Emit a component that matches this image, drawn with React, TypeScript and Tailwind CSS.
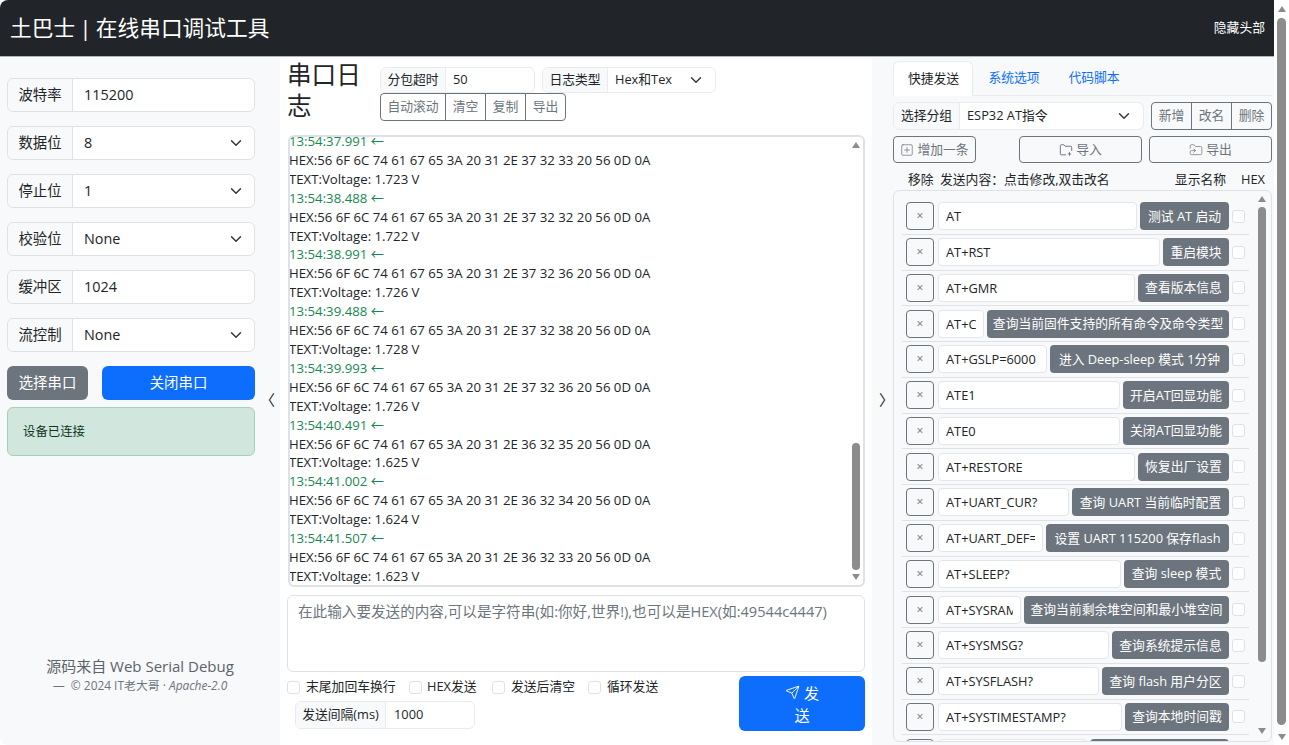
import React from "react";
import { Send, SquarePlus, FolderSymlink } from "lucide-react";

const Chevron = () => (
  <svg width="12" height="12" viewBox="0 0 16 16" fill="none" stroke="#343a40" strokeWidth="2" strokeLinecap="round" strokeLinejoin="round" className="shrink-0">
    <path d="M2 5l6 6 6-6" />
  </svg>
);

const Up = () => <div className="w-0 h-0 border-l-[4.5px] border-r-[4.5px] border-b-[6px] border-l-transparent border-r-transparent border-b-[#8c8c8c]" />;
const Down = () => <div className="w-0 h-0 border-l-[4.5px] border-r-[4.5px] border-t-[6px] border-l-transparent border-r-transparent border-t-[#8c8c8c]" />;

const Field = ({ label, value, select }: { label: string; value: string; select?: boolean }) => (
  <div className="flex h-[34px] rounded-[6px] border border-[#dee2e6] text-[14.4px] text-[#212529]">
    <div className="w-[65px] shrink-0 flex items-center justify-center border-r border-[#dee2e6] bg-[#f8f9fa] rounded-l-[6px]">{label}</div>
    <div className="flex-1 flex items-center justify-between pl-[11px] pr-[12px] bg-white rounded-r-[6px]">
      <span>{value}</span>
      {select && <Chevron />}
    </div>
  </div>
);

const logs = [
  ["13:54:37.991", "1.723"],
  ["13:54:38.488", "1.722"],
  ["13:54:38.991", "1.726"],
  ["13:54:39.488", "1.728"],
  ["13:54:39.993", "1.726"],
  ["13:54:40.491", "1.625"],
  ["13:54:41.002", "1.624"],
  ["13:54:41.507", "1.623"],
];

const hexFor = (v: string) => `HEX:56 6F 6C 74 61 67 65 3A 20 31 2E 3${v[2]} 3${v[3]} 3${v[4]} 20 56 0D 0A`;

const rows: [string, string, number][] = [
  ["AT", "测试 AT 启动", 89],
  ["AT+RST", "重启模块", 66],
  ["AT+GMR", "查看版本信息", 91],
  ["AT+CMD?", "查询当前固件支持的所有命令及命令类型", 242],
  ["AT+GSLP=6000", "进入 Deep-sleep 模式 1分钟", 179],
  ["ATE1", "开启AT回显功能", 106],
  ["ATE0", "关闭AT回显功能", 106],
  ["AT+RESTORE", "恢复出厂设置", 91],
  ["AT+UART_CUR?", "查询 UART 当前临时配置", 157],
  ["AT+UART_DEF=115200,8,1,0,3", "设置 UART 115200 保存flash", 183],
  ["AT+SLEEP?", "查询 sleep 模式", 105],
  ["AT+SYSRAM?", "查询当前剩余堆空间和最小堆空间", 205],
  ["AT+SYSMSG?", "查询系统提示信息", 117],
  ["AT+SYSFLASH?", "查询 flash 用户分区", 127],
  ["AT+SYSTIMESTAMP?", "查询本地时间戳", 104],
  ["AT+SYSLOG=1", "启用或禁用 AT 错误代码提示", 139],
];

const Check = ({ label, cls }: { label: string; cls: string }) => (
  <div className={`flex items-center ${cls}`}>
    <span className="w-[13px] h-[13px] rounded-[3px] border border-[#dee2e6] bg-white shrink-0" />
    <span>{label}</span>
  </div>
);

export default function App() {
  return (
    <div className="w-[1289px] h-[745px] flex overflow-hidden rounded-[8px] bg-white relative font-['Open_Sans','Noto_Sans_CJK_SC',sans-serif] text-[#212529]">
      <div className="flex-1 min-w-0 flex flex-col">
        <header className="h-[57px] shrink-0 bg-[#212529] border-b border-[#adb5bd] flex items-center justify-between pl-[10px] pr-[9px] text-white">
          <div className="text-[21.7px] [word-spacing:-1.2px]">土巴士 | 在线串口调试工具</div>
          <div className="text-[12.8px]">隐藏头部</div>
        </header>
        <div className="flex-1 min-h-0 flex">
          {/* left */}
          <aside className="w-[280px] shrink-0 bg-[#f8f9fa] pl-[7px] pr-[25px] pt-[21px] flex flex-col relative">
            <div className="flex flex-col gap-[14px]">
              <Field label="波特率" value="115200" />
              <Field label="数据位" value="8" select />
              <Field label="停止位" value="1" select />
              <Field label="校验位" value="None" select />
              <Field label="缓冲区" value="1024" />
              <Field label="流控制" value="None" select />
            </div>
            <div className="flex justify-between mt-[14px]">
              <button className="w-[81px] h-[34px] rounded-[6px] bg-[#6c757d] text-white text-[14.4px]">选择串口</button>
              <button className="w-[153px] h-[34px] rounded-[6px] bg-[#0d6efd] text-white text-[14.4px]">关闭串口</button>
            </div>
            <div className="mt-[7px] h-[49px] rounded-[6px] border border-[#a3cfbb] bg-[#d1e7dd] text-[#0a3622] text-[12.4px] flex items-center pl-[15px] pt-[1px]">设备已连接</div>
            <div className="mt-auto mb-[51px] -ml-[7px] -mr-[25px] text-center text-[#5c636a]">
              <div className="text-[15px] leading-[20px]">源码来自 Web Serial Debug</div>
              <div className="text-[11.9px] leading-[18px] text-[#6c757d]">—&nbsp; © 2024 IT老大哥 · <i>Apache-2.0</i></div>
            </div>
            <span className="absolute left-[260px] top-[333px] text-[15px] leading-[20px] text-[#212529]">〈</span>
          </aside>

          {/* center */}
          <main className="w-[592px] shrink-0 px-[7px] bg-white flex flex-col">
            <div className="flex h-[77px] pt-[2px]">
              <h1 className="w-[93px] shrink-0 text-[24.6px] leading-[31px] font-normal">串口日志</h1>
              <div className="flex flex-col pt-[8px]">
                <div className="flex gap-[7px] h-[26px] text-[12.8px]">
                  <div className="flex w-[155px] rounded-[6px] border border-[#e9ecef]">
                    <div className="w-[65px] flex items-center justify-center bg-[#f8f9fa] border-r border-[#e9ecef] rounded-l-[6px]">分包超时</div>
                    <div className="flex-1 flex items-center pl-[7px]">50</div>
                  </div>
                  <div className="flex w-[174px] rounded-[6px] border border-[#e9ecef]">
                    <div className="w-[65px] flex items-center justify-center bg-[#f8f9fa] border-r border-[#e9ecef] rounded-l-[6px]">日志类型</div>
                    <div className="flex-1 flex items-center justify-between pl-[7px] pr-[13px]">
                      <span className="w-[57px] overflow-hidden whitespace-nowrap">Hex和Text</span>
                      <Chevron />
                    </div>
                  </div>
                </div>
                <div className="flex h-[28px] w-[186px] text-[12.8px] text-[#6c757d] rounded-[4px] border border-[#6c757d]">
                  <div className="w-[65px] flex items-center justify-center border-r border-[#6c757d]">自动滚动</div>
                  <div className="w-[40px] flex items-center justify-center border-r border-[#6c757d]">清空</div>
                  <div className="w-[40px] flex items-center justify-center border-r border-[#6c757d]">复制</div>
                  <div className="flex-1 flex items-center justify-center">导出</div>
                </div>
              </div>
            </div>
            <div className="ml-[1px] mt-[1px] h-[452px] flex rounded-[6px] border-2 border-[#dee2e6] overflow-hidden">
              <div className="flex-1 min-w-0 overflow-hidden text-[13.2px] leading-[18.9px] whitespace-nowrap">
                <div className="-mt-[5px] -ml-[1px]">
                  {logs.map(([t, v]) => (
                    <div key={t}>
                      <div className="text-[#198754]">{t} ←</div>
                      <div>{hexFor(v)}</div>
                      <div>TEXT:Voltage: {v} V</div>
                    </div>
                  ))}
                </div>
              </div>
              <div className="w-[14px] shrink-0 flex flex-col items-center pt-[5px] pb-[5px]">
                <Up />
                <div className="w-[8px] h-[127px] rounded-full bg-[#8c8c8c] mt-[295px]" />
                <div className="mt-auto"><Down /></div>
              </div>
            </div>
            <textarea
              readOnly
              placeholder="在此输入要发送的内容,可以是字符串(如:你好,世界!),也可以是HEX(如:49544c4447)"
              className="mt-[8px] h-[77px] w-full resize-none rounded-[6px] border border-[#dee2e6] px-[10px] py-[5px] text-[14.6px] leading-[21px] placeholder:text-[#6c757d] outline-none"
            />
            <div className="flex mt-[4px]">
              <div className="flex-1 min-w-0 text-[12.8px]">
                <div className="flex h-[22px] items-center">
                  <Check label="末尾加回车换行" cls="gap-[6px] w-[122px]" />
                  <Check label="HEX发送" cls="gap-[5px] w-[83px]" />
                  <Check label="发送后清空" cls="gap-[6px] w-[96px]" />
                  <Check label="循环发送" cls="gap-[6px]" />
                </div>
                <div className="ml-[8px] mt-[3px] flex w-[180px] h-[28px] rounded-[6px] border border-[#e9ecef]">
                  <div className="w-[90px] flex items-center justify-center bg-[#f8f9fa] border-r border-[#e9ecef] rounded-l-[6px]">发送间隔(ms)</div>
                  <div className="flex-1 flex items-center pl-[8px]">1000</div>
                </div>
              </div>
              <button className="w-[126px] h-[55px] rounded-[6px] bg-[#0d6efd] text-white text-[15.2px] leading-[22px] flex flex-col items-center justify-center">
                <span className="flex items-center gap-[4px]"><Send size={15} strokeWidth={1.5} />发</span>
                <span>送</span>
              </button>
            </div>
          </main>

          {/* right */}
          <section className="w-[402px] shrink-0 bg-[#f8f9fa] pl-[21px] pr-[2px] relative min-h-0 flex flex-col">
            <span className="absolute left-[7px] top-[333px] text-[15px] leading-[20px] text-[#212529]">〉</span>
            <div className="flex h-[39px] pt-[4px] border-b border-[#e9ecef] text-[12.8px] text-[#0d6efd]">
              <div className="w-[80px] h-[35px] pl-[1px] bg-white border border-b-0 border-[#e9ecef] rounded-t-[6px] flex items-center justify-center text-[#212529]">快捷发送</div>
              <div className="w-[80px] pl-[2px] flex items-center justify-center">系统选项</div>
              <div className="w-[80px] pl-[2px] flex items-center justify-center">代码脚本</div>
            </div>
            <div className="flex justify-between mt-[6px] h-[28px] text-[12.8px]">
              <div className="flex w-[251px] rounded-[6px] border border-[#e9ecef]">
                <div className="w-[66px] flex items-center justify-center bg-[#f8f9fa] border-r border-[#e9ecef] rounded-l-[6px]">选择分组</div>
                <div className="flex-1 flex items-center justify-between pl-[7px] pr-[13px] bg-white rounded-r-[6px]">
                  <span>ESP32 AT指令</span>
                  <Chevron />
                </div>
              </div>
              <div className="flex w-[121px] rounded-[4px] border border-[#6c757d] text-[#6c757d]">
                <div className="flex-1 flex items-center justify-center border-r border-[#6c757d]">新增</div>
                <div className="flex-1 flex items-center justify-center border-r border-[#6c757d]">改名</div>
                <div className="flex-1 flex items-center justify-center">删除</div>
              </div>
            </div>
            <div className="flex mt-[6px] h-[27px] text-[12.8px] text-[#6c757d]">
              <div className="w-[83px] rounded-[4px] border border-[#6c757d] flex items-center justify-center gap-[3px]">
                <SquarePlus size={14} strokeWidth={1.25} />增加一条
              </div>
              <div className="ml-[43px] w-[123px] rounded-[4px] border border-[#6c757d] flex items-center justify-center gap-[3px]">
                <svg width="14" height="14" viewBox="0 0 16 16" fill="none" stroke="currentColor" strokeWidth="1.1">
                  <path d="M8 13.5H2.5a1 1 0 0 1-1-1V3a1 1 0 0 1 1-1h3l1.5 1.7h6.5a1 1 0 0 1 1 1V9" />
                  <path d="M12 10.5v4M10 12.5h4" />
                </svg>
                导入
              </div>
              <div className="ml-[7px] w-[123px] rounded-[4px] border border-[#6c757d] flex items-center justify-center gap-[3px]">
                <FolderSymlink size={14} strokeWidth={1.25} />导出
              </div>
            </div>
            <div className="h-[27px] pt-[6px] text-[12.8px] flex items-center shrink-0">
              <span className="ml-[15px] w-[32px]">移除</span>
              <span>发送内容：点击修改,双击改名</span>
              <span className="ml-auto">显示名称</span>
              <span className="ml-[15px] mr-[7px]">HEX</span>
            </div>
            <div className="flex-1 min-h-0 flex rounded-[6px] border border-[#dee2e6] bg-[#f8f9fa] overflow-hidden">
              <div className="flex-1 min-w-0 pl-[8px] pt-[8px] overflow-hidden">
                <div className="w-[347px]">
                  {rows.map(([cmd, name, w]) => (
                    <div key={cmd} className="h-[35.75px] px-[4px] flex items-center gap-[4px] border-b border-[#dee2e6]">
                      <button className="w-[28px] h-[28px] shrink-0 rounded-[4px] border border-[#6c757d] text-[#6c757d] text-[12px] leading-none">×</button>
                      <input readOnly value={cmd} className="flex-1 min-w-0 h-[28px] rounded-[4px] border border-[#e3e6ea] bg-white px-[7px] text-[12.8px] outline-none" />
                      <button style={{ width: w }} className="h-[28px] shrink-0 -ml-[1px] rounded-[4px] bg-[#6c757d] text-white text-[12.8px] whitespace-nowrap flex items-center justify-center">{name}</button>
                      <span className="w-[13px] h-[13px] shrink-0 -ml-[1px] rounded-[3px] border border-[#dee2e6] bg-white" />
                    </div>
                  ))}
                </div>
              </div>
              <div className="w-[16px] shrink-0 flex flex-col items-center pt-[5px] pb-[7px] pr-[2px]">
                <Up />
                <div className="w-[8px] h-[455px] rounded-full bg-[#8c8c8c] mt-[5px]" />
                <div className="mt-auto"><Down /></div>
              </div>
            </div>
            <div className="h-[3px] shrink-0" />
          </section>
        </div>
      </div>
      <div className="w-[15px] shrink-0 bg-white flex flex-col items-center pt-[6px] pb-[5px]">
        <Up />
        <div className="w-[9px] h-[707px] rounded-full bg-[#8c8c8c] mt-[6px]" />
        <div className="mt-auto"><Down /></div>
      </div>
    </div>
  );
}
